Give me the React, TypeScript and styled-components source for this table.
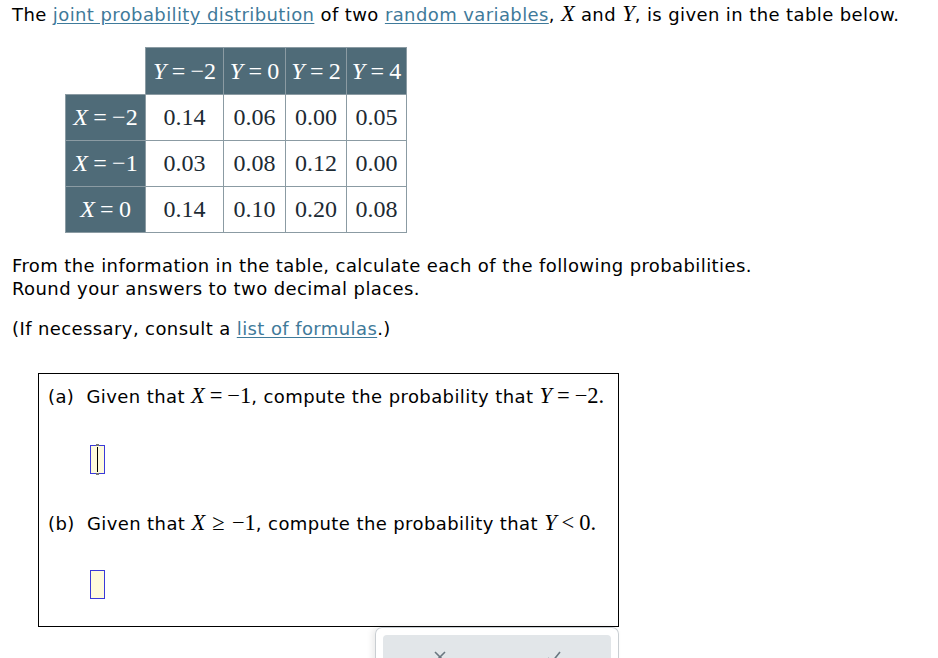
import styled, { createGlobalStyle } from "styled-components";

const GlobalStyle = createGlobalStyle`
  html, body {
    margin: 0;
    padding: 0;
    background: #ffffff;
  }
  body {
    font-family: "DejaVu Sans", Verdana, sans-serif;
    color: #000;
    overflow: hidden;
  }
`;

const Page = styled.div`
  width: 938px;
  height: 658px;
  padding: 3px 12px 0;
  box-sizing: border-box;
  font-size: 18px;
  letter-spacing: 0.4px;
`;

const Para = styled.p<{ $mt?: number }>`
  margin: ${({ $mt }) => $mt ?? 0}px 0 0;
  line-height: 23px;
`;

const Link = styled.a`
  color: #3f7a9a;
  text-decoration: underline;
  text-underline-offset: 2px;
  cursor: pointer;
`;

const M = styled.span`
  font-family: "Liberation Serif", "Times New Roman", serif;
  font-style: italic;
  font-size: 1.25em;
  letter-spacing: 0;
  line-height: 1;
`;

const N = styled.span`
  font-family: "Liberation Serif", "Times New Roman", serif;
  font-size: 1.25em;
  letter-spacing: 0;
  line-height: 1;
`;

const Rel = styled.span<{ $wide?: boolean }>`
  margin: 0 ${({ $wide }) => ($wide ? "0.32em" : "0.22em")};
`;

const Table = styled.table`
  border-collapse: collapse;
  table-layout: fixed;
  width: 342px;
  margin: 21px 0 0 53px;
  font-family: "Liberation Serif", "Times New Roman", serif;
  font-size: 24px;
  letter-spacing: 0;
`;

const Corner = styled.td`
  border: none;
  padding: 0;
`;

const HeadCell = styled.th<{ $h?: number }>`
  height: ${({ $h }) => $h ?? 45}px;
  padding: 0;
  background: #4f6b78;
  color: #fff;
  font-weight: normal;
  border: 1px solid #8b9ba3;
  text-align: center;
  white-space: nowrap;
`;

const Cell = styled.td`
  padding: 0;
  height: 45px;
  border: 1px solid #8b9ba3;
  text-align: center;
  color: #1c2a33;
  white-space: nowrap;
`;

const I = styled.i`
  font-style: italic;
`;

const QuestionBox = styled.div`
  width: 581px;
  height: 254px;
  margin: 33px 0 0 26px;
  border: 1px solid #000;
  box-sizing: border-box;
  padding: 9px 9px 0;
`;

const Question = styled.div<{ $mt?: number }>`
  line-height: 28px;
  margin-top: ${({ $mt }) => $mt ?? 0}px;
`;

const AnswerRow = styled.div<{ $mt: number }>`
  margin: ${({ $mt }) => $mt}px 0 0 42px;
  height: 29px;
`;

const Input = styled.div`
  position: relative;
  width: 15px;
  height: 29px;
  border: 1px solid #3a3ad8;
  background: #fffbdc;
  box-sizing: border-box;
`;

const Caret = styled.div`
  position: absolute;
  left: 6px;
  top: 1px;
  bottom: 1px;
  width: 1px;
  background: #000;
`;

const CaretCap = styled.div<{ $top?: boolean }>`
  position: absolute;
  left: 4px;
  ${({ $top }) => ($top ? "top: -3px;" : "bottom: -3px;")}
  width: 5px;
  height: 4px;
  background: radial-gradient(circle, #777 40%, transparent 45%);
`;

const Toolbar = styled.div`
  margin: 0 0 0 363px;
  width: 244px;
  height: 40px;
  border: 1px solid #c9ced2;
  border-bottom: none;
  border-radius: 7px 7px 0 0;
  box-sizing: border-box;
  padding: 7px 7px 0;
  box-shadow: -3px 0 6px rgba(0, 0, 0, 0.08);
`;

const ToolbarInner = styled.div`
  height: 40px;
  background: #e2e6e9;
  border-radius: 4px 4px 0 0;
  display: flex;
  justify-content: space-around;
  padding-top: 15px;
  box-sizing: border-box;
`;

const ToolIcon = styled.svg`
  width: 14px;
  height: 14px;
  stroke: #6a7780;
  stroke-width: 1.6;
  fill: none;
`;

const rows = [
  { x: "−2", v: ["0.14", "0.06", "0.00", "0.05"] },
  { x: "−1", v: ["0.03", "0.08", "0.12", "0.00"] },
  { x: "0", v: ["0.14", "0.10", "0.20", "0.08"] },
];

const cols = [
  { y: "−2", w: 78 },
  { y: "0", w: 62 },
  { y: "2", w: 61 },
  { y: "4", w: 60 },
];

export default function App() {
  return (
    <>
      <GlobalStyle />
      <Page>
        <Para>
          The <Link>joint probability distribution</Link> of two <Link>random variables</Link>,{" "}
          <M>X</M> and <M>Y</M>, is given in the table below.
        </Para>

        <Table>
          <colgroup>
            <col style={{ width: 80 }} />
            {cols.map(c => (
              <col key={c.y} style={{ width: c.w }} />
            ))}
          </colgroup>
          <thead>
            <tr>
              <Corner />
              {cols.map(c => (
                <HeadCell key={c.y} $h={46}>
                  <I>Y</I>
                  <Rel>=</Rel>
                  {c.y}
                </HeadCell>
              ))}
            </tr>
          </thead>
          <tbody>
            {rows.map(r => (
              <tr key={r.x}>
                <HeadCell as="td" $h={45}>
                  <I>X</I>
                  <Rel>=</Rel>
                  {r.x}
                </HeadCell>
                {r.v.map((v, i) => (
                  <Cell key={i}>{v}</Cell>
                ))}
              </tr>
            ))}
          </tbody>
        </Table>

        <Para $mt={21}>
          From the information in the table, calculate each of the following probabilities.
          <br />
          Round your answers to two decimal places.
        </Para>
        <Para $mt={17}>
          (If necessary, consult a <Link>list of formulas</Link>.)
        </Para>

        <QuestionBox>
          <Question>
            (a)&nbsp; Given that <M>X</M>
            <N>
              <Rel>=</Rel>−1
            </N>
            , compute the probability that <M>Y</M>
            <N>
              <Rel>=</Rel>−2.
            </N>
          </Question>
          <AnswerRow $mt={34}>
            <Input>
              <CaretCap $top />
              <Caret />
              <CaretCap />
            </Input>
          </AnswerRow>
          <Question $mt={36}>
            (b)&nbsp; Given that <M>X</M>
            <N>
              <Rel $wide>≥</Rel>−1
            </N>
            , compute the probability that <M>Y</M>
            <N>
              <Rel>&lt;</Rel>0.
            </N>
          </Question>
          <AnswerRow $mt={32}>
            <Input />
          </AnswerRow>
        </QuestionBox>

        <Toolbar>
          <ToolbarInner>
            <ToolIcon viewBox="0 0 14 14">
              <path d="M2 2 L12 12 M12 2 L2 12" />
            </ToolIcon>
            <ToolIcon viewBox="0 0 14 14">
              <path d="M1 8 L5 12 L13 2" />
            </ToolIcon>
          </ToolbarInner>
        </Toolbar>
      </Page>
    </>
  );
}
